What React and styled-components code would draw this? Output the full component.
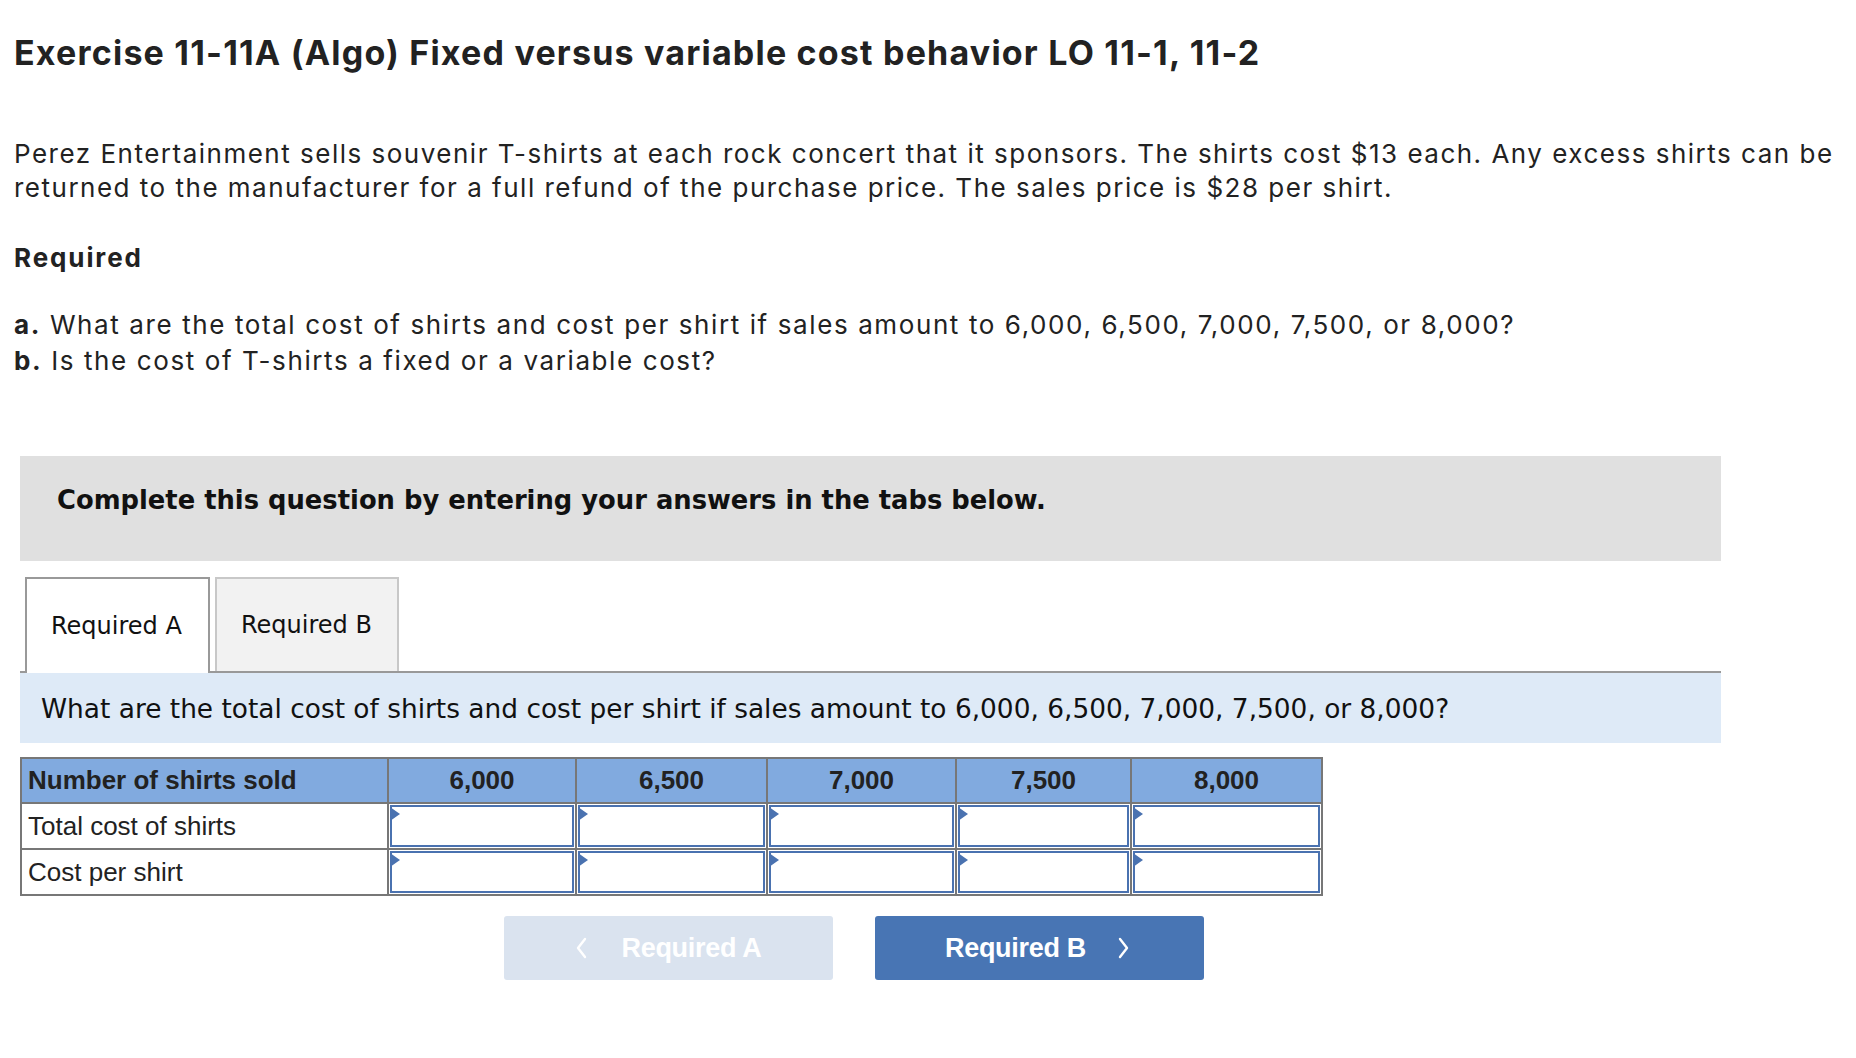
import React from "react";
import styled, { createGlobalStyle } from "styled-components";

const GlobalStyle = createGlobalStyle`
  body {
    margin: 0;
    background: #fff;
    color: #222;
    font-family: "Inter", "Open Sans", sans-serif;
  }
`;

const Page = styled.div`
  padding: 32px 6px 40px 14px;
`;

const Title = styled.h1`
  margin: 0;
  font-family: "Inter", sans-serif;
  font-weight: 700;
  font-size: 34px;
  line-height: 42px;
  letter-spacing: 1.2px;
  color: #222;
`;

const Para = styled.p`
  margin: 63px 0 0 0;
  font-size: 26px;
  line-height: 34px;
  letter-spacing: 1.5px;
  color: #222;
`;

const Required = styled.h2`
  margin: 36px 0 0 0;
  font-size: 26px;
  font-weight: 700;
  line-height: 34px;
  letter-spacing: 1.9px;
`;

const Parts = styled.div`
  margin-top: 32px;
  font-size: 26px;
  line-height: 36px;
  letter-spacing: 1.6px;
  b { font-weight: 700; }
`;

const Section = styled.div`
  margin: 77px 0 0 6px;
  width: 1701px;
`;

const Banner = styled.div`
  background: #e0e0e0;
  height: 105px;
  padding: 28px 37px 0 37px;
  box-sizing: border-box;
  font-family: "DejaVu Sans", Verdana, sans-serif;
  font-weight: 700;
  font-size: 25.8px;
  line-height: 32px;
  color: #111;
`;

const TabBar = styled.div`
  display: flex;
  gap: 5px;
  margin-top: 16px;
  padding-left: 5px;
  border-bottom: 2px solid #999;
`;

const Tab = styled.div`
  box-sizing: border-box;
  padding: 0 0 0 24px;
  display: flex;
  align-items: center;
  font-family: "DejaVu Sans", Verdana, sans-serif;
  font-size: 24px;
  color: #111;
  background: ${(p) => (p.active ? "#fff" : "#f2f2f2")};
  border: 2px solid ${(p) => (p.active ? "#999" : "#c8c8c8")};
  border-bottom: none;
  margin-bottom: ${(p) => (p.active ? "-2px" : "0")};
  height: ${(p) => (p.active ? "96px" : "94px")};
  width: ${(p) => p.w}px;
`;

const Prompt = styled.div`
  background: #deeaf7;
  height: 70px;
  display: flex;
  align-items: center;
  padding-left: 21px;
  font-family: "DejaVu Sans", Verdana, sans-serif;
  font-size: 26.4px;
  color: #111;
`;

const Table = styled.table`
  margin-top: 14px;
  border-collapse: collapse;
  font-family: "Liberation Sans", Arial, sans-serif;
  color: #222;
  border: 2px solid #777;
`;

const HeadCell = styled.th`
  background: #81aadf;
  border: 2px solid #777;
  height: 45px;
  padding: 0 6px;
  font-size: 26px;
  font-weight: 700;
  text-align: ${(p) => (p.left ? "left" : "center")};
  width: ${(p) => p.w}px;
  box-sizing: border-box;
`;

const LabelCell = styled.td`
  border: 2px solid #777;
  padding: 0 6px;
  font-size: 26px;
  text-align: left;
`;

const InputCell = styled.td`
  border: 2px solid #777;
  padding: 1px;
`;

const InputBox = styled.div`
  position: relative;
  height: 38px;
  border: 2px solid #4a72b0;
  background: #fff;
`;

const Marker = styled.span`
  position: absolute;
  left: -2px;
  top: 0;
  width: 0;
  height: 0;
  border-top: 7px solid transparent;
  border-bottom: 7px solid transparent;
  border-left: 10px solid #4a72b0;
`;

const NavRow = styled.div`
  display: flex;
  justify-content: center;
  gap: 42px;
  margin-top: 20px;
  padding-right: 33px;
`;

const NavButton = styled.button`
  width: 329px;
  height: 64px;
  border: none;
  border-radius: 3px;
  background: ${(p) => (p.disabled ? "#dae3ef" : "#4875b4")};
  color: #fff;
  font-family: "Liberation Sans", Arial, sans-serif;
  font-weight: 700;
  font-size: 27px;
  letter-spacing: -0.3px;
  display: flex;
  align-items: center;
  justify-content: center;
  gap: ${(p) => (p.disabled ? "34px" : "32px")};
  padding: ${(p) => (p.disabled ? "0" : "0 4px 0 0")};
  svg { display: block; }
`;

const Chevron = ({ dir }) => (
  <svg width="12" height="22" viewBox="0 0 12 22" fill="none">
    <path
      d={dir === "left" ? "M10 2 L3 11 L10 20" : "M2 2 L9 11 L2 20"}
      stroke="#fff"
      strokeWidth="2.4"
      strokeLinecap="round"
      strokeLinejoin="round"
    />
  </svg>
);

const cols = [
  { label: "6,000", w: 188 },
  { label: "6,500", w: 191 },
  { label: "7,000", w: 189 },
  { label: "7,500", w: 175 },
  { label: "8,000", w: 191 },
];

const rows = ["Total cost of shirts", "Cost per shirt"];

export default function App() {
  return (
    <Page>
      <GlobalStyle />
      <Title>Exercise 11-11A (Algo) Fixed versus variable cost behavior LO 11-1, 11-2</Title>
      <Para>
        Perez Entertainment sells souvenir T-shirts at each rock concert that it sponsors. The shirts cost $13 each. Any excess shirts can be
        returned to the manufacturer for a full refund of the purchase price. The sales price is $28 per shirt.
      </Para>
      <Required>Required</Required>
      <Parts>
        <div><b>a.</b> What are the total cost of shirts and cost per shirt if sales amount to 6,000, 6,500, 7,000, 7,500, or 8,000?</div>
        <div><b>b.</b> Is the cost of T-shirts a fixed or a variable cost?</div>
      </Parts>

      <Section>
        <Banner>Complete this question by entering your answers in the tabs below.</Banner>
        <TabBar>
          <Tab active w={185}>Required A</Tab>
          <Tab w={184}>Required B</Tab>
        </TabBar>
        <Prompt>What are the total cost of shirts and cost per shirt if sales amount to 6,000, 6,500, 7,000, 7,500, or 8,000?</Prompt>

        <Table>
          <thead>
            <tr>
              <HeadCell left w={367}>Number of shirts sold</HeadCell>
              {cols.map((c) => (
                <HeadCell key={c.label} w={c.w}>{c.label}</HeadCell>
              ))}
            </tr>
          </thead>
          <tbody>
            {rows.map((r) => (
              <tr key={r}>
                <LabelCell>{r}</LabelCell>
                {cols.map((c) => (
                  <InputCell key={c.label}>
                    <InputBox>
                      <Marker />
                    </InputBox>
                  </InputCell>
                ))}
              </tr>
            ))}
          </tbody>
        </Table>

        <NavRow>
          <NavButton disabled>
            <Chevron dir="left" />
            <span>Required A</span>
          </NavButton>
          <NavButton>
            <span>Required B</span>
            <Chevron dir="right" />
          </NavButton>
        </NavRow>
      </Section>
    </Page>
  );
}
